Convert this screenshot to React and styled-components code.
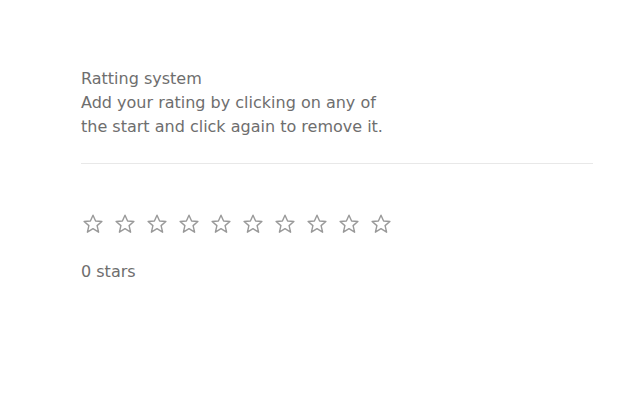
import React, { useState } from "react";
import styled, { createGlobalStyle } from "styled-components";

const GlobalStyle = createGlobalStyle`
  body {
    margin: 0;
    background: #fff;
    font-family: "DejaVu Sans", sans-serif;
  }
`;

const Page = styled.div`
  padding: 67px 51px 0 81px;
  color: #6e6e6e;
  font-size: 16px;
  line-height: 24px;
`;

const Intro = styled.div`
  width: 320px;
`;

const Divider = styled.hr`
  border: 0;
  border-top: 1px solid #e8e8e8;
  margin: 24px 0 0;
`;

const StarRow = styled.div`
  display: flex;
  gap: 12px;
  margin: 50px 0 0 2px;
`;

const StarButton = styled.svg`
  width: 20px;
  height: 20px;
  cursor: pointer;
  display: block;
  fill: ${(p) => (p.$active ? "#f5b301" : "none")};
  stroke: ${(p) => (p.$active ? "#f5b301" : "#999")};
  stroke-width: 1.4;
  stroke-linejoin: round;
`;

const Count = styled.div`
  margin-top: 26px;
`;

const App = () => {
  const [rating, setRating] = useState(0);

  const toggle = (n) => {
    setRating(rating === n ? 0 : n);
  };

  return (
    <Page>
      <GlobalStyle />
      <Intro>
        Ratting system
        <br />
        Add your rating by clicking on any of the start and click again to
        remove it.
      </Intro>
      <Divider />
      <StarRow>
        {Array.from({ length: 10 }, (_, i) => (
          <StarButton
            key={i}
            viewBox="0 0 20 20"
            $active={i < rating}
            onClick={() => toggle(i + 1)}
          >
            <polygon points="10,1.2 12.6,7 18.9,7.5 14.1,11.6 15.6,18.2 10,14.7 4.4,18.2 5.9,11.6 1.1,7.5 7.4,7" />
          </StarButton>
        ))}
      </StarRow>
      <Count>{rating} stars</Count>
    </Page>
  );
};

export default App;
